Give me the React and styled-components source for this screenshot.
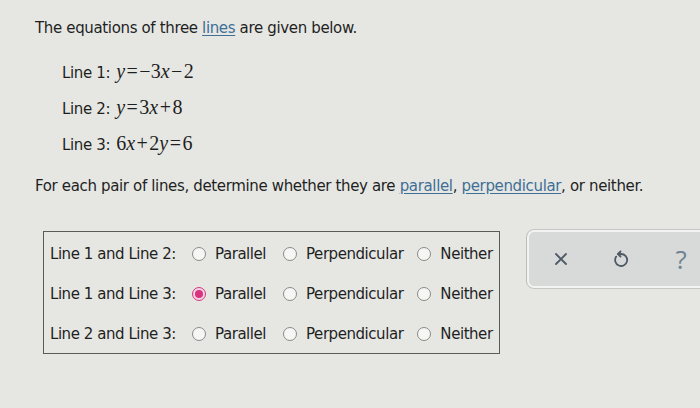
import React from 'react';
import styled, { createGlobalStyle } from 'styled-components';

const Global = createGlobalStyle`
  html, body {
    margin: 0;
    padding: 0;
    background: #e6e7e3;
  }
  body {
    width: 700px;
    height: 408px;
    overflow: hidden;
    font-family: "DejaVu Sans", Verdana, sans-serif;
    color: #1f1f1f;
  }
`;

const Page = styled.div`
  padding: 19px 0 0 35px;
`;

const Para = styled.p`
  margin: 0;
  font-size: 15px;
  line-height: 18px;
  letter-spacing: -0.35px;
`;

const Link = styled.span`
  color: #3f6f96;
  text-decoration: underline;
  text-underline-offset: 2px;
`;

const Equations = styled.div`
  display: flex;
  flex-direction: column;
  gap: 13px;
  margin: 23px 0 0 27px;
`;

const EqRow = styled.div`
  display: flex;
  align-items: baseline;
  gap: 6px;
  height: 23px;
  font-size: 15px;
  letter-spacing: -0.35px;
`;

const Math = styled.span`
  font-family: "Liberation Serif", "Times New Roman", serif;
  font-size: 20px;
  letter-spacing: 0;
`;

const V = styled.i`
  font-style: italic;
`;

const Op = styled.span`
  margin: 0 1.5px;
`;

const Instruction = styled(Para)`
  margin-top: 22px;
`;

const Work = styled.div`
  display: flex;
  align-items: flex-start;
  gap: 27px;
  margin: 36px 0 0 8px;
`;

const Table = styled.div`
  width: 449px;
  border: 1px solid #5b5b5b;
  padding: 10px 0 7px 6px;
  display: flex;
  flex-direction: column;
  gap: 16px;
`;

const Row = styled.div`
  display: flex;
  align-items: center;
  height: 24px;
  font-size: 15px;
  letter-spacing: -0.45px;
  white-space: nowrap;
`;

const Label = styled.span`
  width: 142px;
`;

const Option = styled.label`
  display: flex;
  align-items: center;
  gap: 9px;
  margin-right: ${p => p.$mr}px;
`;

const Radio = styled.span`
  width: 14px;
  height: 14px;
  border-radius: 50%;
  box-sizing: border-box;
  border: 1px solid ${p => (p.$on ? '#d43a80' : '#8a8a8a')};
  background: ${p => (p.$on ? '#f5d3e3' : '#f6f6f4')};
  display: flex;
  align-items: center;
  justify-content: center;
  &::after {
    content: '';
    width: 8px;
    height: 8px;
    border-radius: 50%;
    background: ${p => (p.$on ? '#d8337f' : 'transparent')};
  }
`;

const Tools = styled.div`
  flex: 1;
  height: 54px;
  margin-top: -1px;
  border: 2px solid #f3f4f2;
  border-right: none;
  border-radius: 7px 0 0 7px;
  background: #d7dad8;
  box-shadow: -1px 0 0 #b9bcba, 0 -1px 0 #c4c7c5, 0 1px 0 #c4c7c5;
  display: flex;
  align-items: center;
  padding-left: 20px;
  gap: 36px;
`;

const Tool = styled.button`
  width: 24px;
  height: 24px;
  padding: 0;
  border: none;
  background: none;
  display: flex;
  align-items: center;
  justify-content: center;
  color: ${p => p.$color || '#4f5a66'};
`;

const Help = styled(Tool)`
  font-family: "Open Sans", "DejaVu Sans", sans-serif;
  font-size: 26px;
  font-weight: 400;
  line-height: 24px;
`;

const rows = [
  { label: 'Line 1 and Line 2:', value: null },
  { label: 'Line 1 and Line 3:', value: 'Parallel' },
  { label: 'Line 2 and Line 3:', value: null },
];

const options = [
  { name: 'Parallel', mr: 17 },
  { name: 'Perpendicular', mr: 14 },
  { name: 'Neither', mr: 0 },
];

export default function App() {
  return (
    <Page>
      <Global />
      <Para>
        The equations of three <Link>lines</Link> are given below.
      </Para>

      <Equations>
        <EqRow>
          Line 1:
          <Math>
            <V>y</V><Op>=</Op>−3<V>x</V><Op>−</Op>2
          </Math>
        </EqRow>
        <EqRow>
          Line 2:
          <Math>
            <V>y</V><Op>=</Op>3<V>x</V><Op>+</Op>8
          </Math>
        </EqRow>
        <EqRow>
          Line 3:
          <Math>
            6<V>x</V><Op>+</Op>2<V>y</V><Op>=</Op>6
          </Math>
        </EqRow>
      </Equations>

      <Instruction>
        For each pair of lines, determine whether they are <Link>parallel</Link>,{' '}
        <Link>perpendicular</Link>, or neither.
      </Instruction>

      <Work>
        <Table>
          {rows.map(r => (
            <Row key={r.label}>
              <Label>{r.label}</Label>
              {options.map(o => (
                <Option key={o.name} $mr={o.mr}>
                  <Radio $on={r.value === o.name} />
                  {o.name}
                </Option>
              ))}
            </Row>
          ))}
        </Table>

        <Tools>
          <Tool aria-label="Clear">
            <svg width="14" height="14" viewBox="0 0 14 14" fill="none" stroke="currentColor" strokeWidth="1.8" strokeLinecap="round">
              <path d="M2 2 L12 12 M12 2 L2 12" />
            </svg>
          </Tool>
          <Tool aria-label="Undo">
            <svg width="18" height="18" viewBox="0 0 18 18" fill="none" stroke="currentColor" strokeWidth="1.8" strokeLinecap="round" strokeLinejoin="round">
              <path d="M8.5 1.5 L6 4 L8.5 6.5" />
              <path d="M6 4 H9 A6 6 0 1 1 4.2 6.6" />
            </svg>
          </Tool>
          <Help aria-label="Help" $color="#6f8192">?</Help>
        </Tools>
      </Work>
    </Page>
  );
}
